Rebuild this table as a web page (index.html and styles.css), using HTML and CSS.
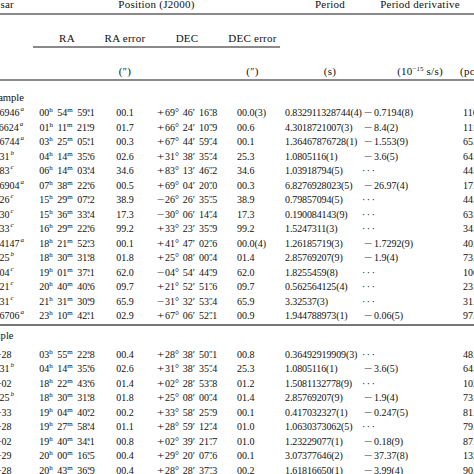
FILE: index.html
```html
<!DOCTYPE html>
<html>
<head>
<meta charset="utf-8">
<link rel="stylesheet" href="styles.css">
</head>
<body>
<div class="tbl">
  <div class="head">
    <div class="h1 pul">Pulsar</div>
    <div class="h1 pos">Position (J2000)</div>
    <div class="h1 c6">Period</div>
    <div class="h1 c7">Period derivative</div>
    <div class="h1 c8">DM</div>
    <div class="rule full r1"></div>
    <div class="h2 c2">RA</div>
    <div class="h2 c3">RA error</div>
    <div class="h2 c4">DEC</div>
    <div class="h2 c5">DEC error</div>
    <div class="rule part"></div>
    <div class="h3 c3">(<span class="pr">″</span>)</div>
    <div class="h3 c5">(<span class="pr">″</span>)</div>
    <div class="h3 c6">(s)</div>
    <div class="h3 c7">(10<sup class="ex">−15</sup> s/s)</div>
    <div class="h3 c8 left">(pc cm<sup class="ex">−3</sup>)</div>
    <div class="rule full r3"></div>
  </div>

  <div class="sec first">Main sample</div>
  <div class="rows">
    <div class="row"><span class="nm">J0054+6946<sup class="fn">a</sup></span><span class="ra">00<sup>h</sup> 54<sup>m</sup> 59<sup class="ov">s</sup>.1</span><span class="re">00.1</span><span class="de"><span class="sg">+</span>69° 46′ 16<span class="ov2">″</span>.8</span><span class="dee">00.0(3)</span><span class="p">0.832911328744(4)</span><span class="pd"><span class="sgm">−</span>0.7194(8)</span><span class="dm">116.5(3)</span></div>
    <div class="row"><span class="nm">J0111+6624<sup class="fn">a</sup></span><span class="ra">01<sup>h</sup> 11<sup>m</sup> 21<sup class="ov">s</sup>.9</span><span class="re">01.7</span><span class="de"><span class="sg">+</span>66° 24′ 10<span class="ov2">″</span>.9</span><span class="dee">00.6</span><span class="p">4.3018721007(3)</span><span class="pd"><span class="sgm">−</span>8.4(2)</span><span class="dm">111.2(5)</span></div>
    <div class="row"><span class="nm">J0325+6744<sup class="fn">a</sup></span><span class="ra">03<sup>h</sup> 25<sup>m</sup> 05<sup class="ov">s</sup>.1</span><span class="re">00.3</span><span class="de"><span class="sg">+</span>67° 44′ 59<span class="ov2">″</span>.4</span><span class="dee">00.1</span><span class="p">1.36467876728(1)</span><span class="pd"><span class="sgm">−</span>1.553(9)</span><span class="dm">65.28(6)</span></div>
    <div class="row"><span class="nm">J0414+31<sup class="fn">b</sup></span><span class="ra">04<sup>h</sup> 14<sup>m</sup> 35<sup class="ov">s</sup>.6</span><span class="re">02.6</span><span class="de"><span class="sg">+</span>31° 38′ 35<span class="ov2">″</span>.4</span><span class="dee">25.3</span><span class="p">1.0805116(1)</span><span class="pd"><span class="sgm">−</span>3.6(5)</span><span class="dm">64.4(2)</span></div>
    <div class="row"><span class="nm">J0613+83<sup class="fn">c</sup></span><span class="ra">06<sup>h</sup> 14<sup>m</sup> 03<sup class="ov">s</sup>.4</span><span class="re">34.6</span><span class="de"><span class="sg">+</span>83° 13′ 46<span class="ov2">″</span>.2</span><span class="dee">34.6</span><span class="p">1.03918794(5)</span><span class="pd"><span class="dots">···</span></span><span class="dm">44.6(2)</span></div>
    <div class="row"><span class="nm">J0738+6904<sup class="fn">a</sup></span><span class="ra">07<sup>h</sup> 38<sup>m</sup> 22<sup class="ov">s</sup>.6</span><span class="re">00.5</span><span class="de"><span class="sg">+</span>69° 04′ 20<span class="ov2">″</span>.0</span><span class="dee">00.3</span><span class="p">6.8276928023(5)</span><span class="pd"><span class="sgm">−</span>26.97(4)</span><span class="dm">17.5(1)</span></div>
    <div class="row"><span class="nm">J1529−26<sup class="fn">c</sup></span><span class="ra">15<sup>h</sup> 29<sup>m</sup> 07<sup class="ov">s</sup>.2</span><span class="re">38.9</span><span class="de"><span class="sg">−</span>26° 26′ 35<span class="ov2">″</span>.5</span><span class="dee">38.9</span><span class="p">0.79857094(5)</span><span class="pd"><span class="dots">···</span></span><span class="dm">44.0(4)</span></div>
    <div class="row"><span class="nm">J1536−30<sup class="fn">c</sup></span><span class="ra">15<sup>h</sup> 36<sup>m</sup> 33<sup class="ov">s</sup>.4</span><span class="re">17.3</span><span class="de"><span class="sg">−</span>30° 06′ 14<span class="ov2">″</span>.4</span><span class="dee">17.3</span><span class="p">0.190084143(9)</span><span class="pd"><span class="dots">···</span></span><span class="dm">63.1(3)</span></div>
    <div class="row"><span class="nm">J1629+33<sup class="fn">c</sup></span><span class="ra">16<sup>h</sup> 29<sup>m</sup> 22<sup class="ov">s</sup>.6</span><span class="re">99.2</span><span class="de"><span class="sg">+</span>33° 23′ 35<span class="ov2">″</span>.9</span><span class="dee">99.2</span><span class="p">1.5247311(3)</span><span class="pd"><span class="dots">···</span></span><span class="dm">34.8(3)</span></div>
    <div class="row"><span class="nm">J1821+4147<sup class="fn">a</sup></span><span class="ra">18<sup>h</sup> 21<sup>m</sup> 52<sup class="ov">s</sup>.3</span><span class="re">00.1</span><span class="de"><span class="sg">+</span>41° 47′ 02<span class="ov2">″</span>.6</span><span class="dee">00.0(4)</span><span class="p">1.26185719(3)</span><span class="pd"><span class="sgm">−</span>1.7292(9)</span><span class="dm">40.6(1)</span></div>
    <div class="row"><span class="nm">J1830+25<sup class="fn">b</sup></span><span class="ra">18<sup>h</sup> 30<sup>m</sup> 31<sup class="ov">s</sup>.8</span><span class="re">01.8</span><span class="de"><span class="sg">+</span>25° 08′ 00<span class="ov2">″</span>.4</span><span class="dee">01.4</span><span class="p">2.85769207(9)</span><span class="pd"><span class="sgm">−</span>1.9(4)</span><span class="dm">73.1(2)</span></div>
    <div class="row"><span class="nm">J1901−04<sup class="fn">c</sup></span><span class="ra">19<sup>h</sup> 01<sup>m</sup> 37<sup class="ov">s</sup>.1</span><span class="re">62.0</span><span class="de"><span class="sg">−</span>04° 54′ 44<span class="ov2">″</span>.9</span><span class="dee">62.0</span><span class="p">1.8255459(8)</span><span class="pd"><span class="dots">···</span></span><span class="dm">106.4(5)</span></div>
    <div class="row"><span class="nm">J2040+21<sup class="fn">c</sup></span><span class="ra">20<sup>h</sup> 40<sup>m</sup> 40<sup class="ov">s</sup>.6</span><span class="re">09.7</span><span class="de"><span class="sg">+</span>21° 52′ 51<span class="ov2">″</span>.6</span><span class="dee">09.7</span><span class="p">0.562564125(4)</span><span class="pd"><span class="dots">···</span></span><span class="dm">23.5(1)</span></div>
    <div class="row"><span class="nm">J2131−31<sup class="fn">c</sup></span><span class="ra">21<sup>h</sup> 31<sup>m</sup> 30<sup class="ov">s</sup>.9</span><span class="re">65.9</span><span class="de"><span class="sg">−</span>31° 32′ 53<span class="ov2">″</span>.4</span><span class="dee">65.9</span><span class="p">3.32537(3)</span><span class="pd"><span class="dots">···</span></span><span class="dm">31.9(2)</span></div>
    <div class="row"><span class="nm">J2310+6706<sup class="fn">a</sup></span><span class="ra">23<sup>h</sup> 10<sup>m</sup> 42<sup class="ov">s</sup>.1</span><span class="re">02.9</span><span class="de"><span class="sg">+</span>67° 06′ 52<span class="ov2">″</span>.1</span><span class="dee">00.9</span><span class="p">1.944788973(1)</span><span class="pd"><span class="sgm">−</span>0.06(5)</span><span class="dm">97.7(1)</span></div>
  </div>
  <div class="rule full thick"></div>

  <div class="sec second">Old sample</div>
  <div class="rows rows2">
    <div class="row"><span class="nm pad">J0355+28</span><span class="ra">03<sup>h</sup> 55<sup>m</sup> 22<sup class="ov">s</sup>.8</span><span class="re">00.4</span><span class="de"><span class="sg">+</span>28° 38′ 50<span class="ov2">″</span>.1</span><span class="dee">00.8</span><span class="p">0.36492919909(3)</span><span class="pd"><span class="dots">···</span></span><span class="dm">48.7(2)</span></div>
    <div class="row"><span class="nm">J0414+31<sup class="fn">b</sup></span><span class="ra">04<sup>h</sup> 14<sup>m</sup> 35<sup class="ov">s</sup>.6</span><span class="re">02.6</span><span class="de"><span class="sg">+</span>31° 38′ 35<span class="ov2">″</span>.4</span><span class="dee">25.3</span><span class="p">1.0805116(1)</span><span class="pd"><span class="sgm">−</span>3.6(5)</span><span class="dm">64.4(2)</span></div>
    <div class="row"><span class="nm pad">J1822+02</span><span class="ra">18<sup>h</sup> 22<sup>m</sup> 43<sup class="ov">s</sup>.6</span><span class="re">01.4</span><span class="de"><span class="sg">+</span>02° 28′ 53<span class="ov2">″</span>.8</span><span class="dee">01.2</span><span class="p">1.5081132778(9)</span><span class="pd"><span class="dots">···</span></span><span class="dm">103.2(4)</span></div>
    <div class="row"><span class="nm">J1830+25<sup class="fn">b</sup></span><span class="ra">18<sup>h</sup> 30<sup>m</sup> 31<sup class="ov">s</sup>.8</span><span class="re">01.8</span><span class="de"><span class="sg">+</span>25° 08′ 00<span class="ov2">″</span>.4</span><span class="dee">01.4</span><span class="p">2.85769207(9)</span><span class="pd"><span class="sgm">−</span>1.9(4)</span><span class="dm">73.1(2)</span></div>
    <div class="row"><span class="nm pad">J1904+33</span><span class="ra">19<sup>h</sup> 04<sup>m</sup> 40<sup class="ov">s</sup>.2</span><span class="re">00.2</span><span class="de"><span class="sg">+</span>33° 58′ 25<span class="ov2">″</span>.9</span><span class="dee">00.1</span><span class="p">0.417032327(1)</span><span class="pd"><span class="sgm">−</span>0.247(5)</span><span class="dm">81.6(1)</span></div>
    <div class="row"><span class="nm pad">J1927+28</span><span class="ra">19<sup>h</sup> 27<sup>m</sup> 58<sup class="ov">s</sup>.4</span><span class="re">01.1</span><span class="de"><span class="sg">+</span>28° 59′ 12<span class="ov2">″</span>.4</span><span class="dee">01.0</span><span class="p">1.0630373062(5)</span><span class="pd"><span class="dots">···</span></span><span class="dm">79.3(2)</span></div>
    <div class="row"><span class="nm pad">J1940+02</span><span class="ra">19<sup>h</sup> 40<sup>m</sup> 34<sup class="ov">s</sup>.1</span><span class="re">00.8</span><span class="de"><span class="sg">+</span>02° 39′ 21<span class="ov2">″</span>.7</span><span class="dee">01.0</span><span class="p">1.23229077(1)</span><span class="pd"><span class="sgm">−</span>0.18(9)</span><span class="dm">87.4(3)</span></div>
    <div class="row"><span class="nm pad">J2000+29</span><span class="ra">20<sup>h</sup> 00<sup>m</sup> 16<sup class="ov">s</sup>.5</span><span class="re">00.4</span><span class="de"><span class="sg">+</span>29° 20′ 07<span class="ov2">″</span>.6</span><span class="dee">00.1</span><span class="p">3.07377646(2)</span><span class="pd"><span class="sgm">−</span>37.37(8)</span><span class="dm">132.5(2)</span></div>
    <div class="row"><span class="nm pad">J2043+28</span><span class="ra">20<sup>h</sup> 43<sup>m</sup> 36<sup class="ov">s</sup>.9</span><span class="re">00.4</span><span class="de"><span class="sg">+</span>28° 28′ 37<span class="ov2">″</span>.3</span><span class="dee">00.2</span><span class="p">1.61816650(1)</span><span class="pd"><span class="sgm">−</span>3.99(4)</span><span class="dm">90.1(2)</span></div>
  </div>
</div>
</body>
</html>
```

FILE: styles.css
```css
html, body {
  margin: 0;
  padding: 0;
  background: #ffffff;
  overflow: hidden;
  width: 474px;
  height: 474px;
}
.tbl {
  margin-left: -27px;
  margin-top: -4px;
  width: 600px;
  font-family: "Liberation Serif", "Times New Roman", serif;
  font-size: 10px;
  color: #111111;
}
.head {
  display: grid;
  grid-template-columns: 60px 68px 48px 76px 55px 100px 80px 113px;
  text-align: center;
  font-size: 11px;
  letter-spacing: 0.25px;
}
.h1 { grid-row: 1; height: 17px; line-height: 17px; }
.h2 { grid-row: 3; padding-top: 16px; height: 15px; line-height: 15px; }
.h3 { grid-row: 5; padding-top: 16px; height: 15px; line-height: 15px; }
.pul { grid-column: 1; text-align: left; padding-left: 12px; }
.pos { grid-column: 2 / 6; }
.c2 { grid-column: 2; }
.c3 { grid-column: 3; }
.c4 { grid-column: 4; }
.c5 { grid-column: 5; }
.c6 { grid-column: 6; }
.c7 { grid-column: 7; }
.c8 { grid-column: 8; }
.left { text-align: left; }
.rule { height: 2px; background: #8a8a8a; }
.head .rule.full { grid-column: 1 / -1; }
.head .r1 { grid-row: 2; }
.head .r3 { grid-row: 6; }
.rule.part { grid-column: 2 / 6; grid-row: 4; }
.rule.thick { background: #777777; }
.ex { font-size: 7px; vertical-align: 4px; line-height: 0; letter-spacing: 0; }
.pr { font-size: 10px; }

.sec {
  line-height: 14.5px;
  height: 14.5px;
  font-size: 10.6px;
}
.sec.first { padding-top: 9.5px; margin-left: -4px; }
.sec.second { padding-top: 3px; margin-left: -8px; }
.rows { padding-top: 1px; }
.rows.rows2 { padding-top: 4.5px; }
.row {
  display: grid;
  grid-template-columns: 60px 68px 48px 76px 55px 77px 101px 115px;
  height: 14.5px;
  line-height: 14.5px;
  white-space: nowrap;
}
.nm { text-align: left; margin-left: -3px; }
.nm.pad { margin-left: -1px; }
.fn { font-style: italic; font-size: 7px; vertical-align: 5px; line-height: 0; margin-left: 1px; }
.ra { text-align: center; word-spacing: 2px; }
.ra sup { font-size: 7px; vertical-align: 4px; line-height: 0; }
.ra sup.ov { margin-right: -2.7px; }
.re { text-align: center; }
.de { text-align: center; word-spacing: 1.5px; }
.sg {
  display: inline-block;
  width: 0.82em;
  text-align: left;
  transform: scaleX(1.3);
  transform-origin: left center;
}
.ov2 { font-size: 9px; margin-right: -3px; position: relative; top: -1px; }
.dee { padding-left: 12px; }
.p { padding-left: 5px; letter-spacing: -0.12px; }
.pd { padding-left: 7px; }
.sgm {
  display: inline-block;
  width: 1.0em;
  text-align: left;
  transform: scaleX(1.5);
  transform-origin: left center;
}
.dots { letter-spacing: 1.5px; margin-left: -2px; }
.dm { padding-left: 5px; }
```
